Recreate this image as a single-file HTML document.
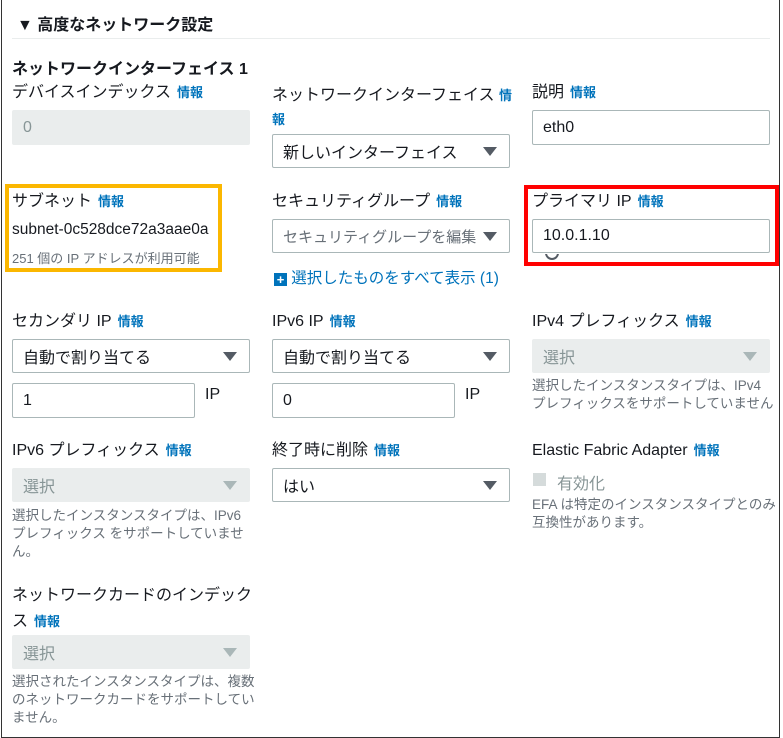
<!DOCTYPE html>
<html><head><meta charset="utf-8"><style>
*{margin:0;padding:0;box-sizing:border-box}
body{width:783px;height:738px;background:#fff;position:relative;overflow:hidden;font-family:"Liberation Sans","Noto Sans CJK JP",sans-serif;color:#16191f}
.frame{position:absolute;left:1px;top:-2px;width:779px;height:740px;border:1.5px solid #333}
.a{position:absolute;white-space:nowrap}
.lb{font-size:16px;line-height:18px}
.i{color:#0073bb;font-weight:bold;font-size:13px;margin-left:6px}
.box{position:absolute;border:1px solid #aab7b8;border-radius:2px;background:#fff;font-size:16px;padding-left:10px;display:flex;align-items:center}
.dis{background:#eaeded;border-color:#eaeded;color:#879596}
.arr{position:absolute;right:12px;top:50%;margin-top:-4px;width:0;height:0;border-left:7px solid transparent;border-right:7px solid transparent;border-top:9px solid #545b64}
.dis .arr{border-top-color:#aab7b8}
.help{font-size:13.5px;line-height:18px;color:#687078}
</style></head><body>
<div class="frame"></div>
<div class="a" style="left:17px;top:11px;font-size:16px;font-weight:bold">▼ 高度なネットワーク設定</div>
<div class="a" style="left:12px;top:38px;width:758px;height:1px;background:#eaeded"></div>
<div class="a" style="left:12px;top:55px;font-size:16px;font-weight:bold">ネットワークインターフェイス 1</div>

<div class="a lb" style="left:12px;top:84px">デバイスインデックス<span class="i">情報</span></div>
<div class="box dis" style="left:12px;top:110px;width:238px;height:35px">0</div>
<div class="a lb" style="left:272px;top:84px;line-height:24px">ネットワークインターフェイス <span class="i" style="margin:0">情</span><br><span class="i" style="margin:0">報</span></div>
<div class="box" style="left:272px;top:134px;width:238px;height:34px">新しいインターフェイス<div class="arr"></div></div>
<div class="a lb" style="left:532px;top:84px">説明<span class="i">情報</span></div>
<div class="box" style="left:532px;top:110px;width:238px;height:35px">eth0</div>

<div class="a" style="left:5px;top:184px;width:217px;height:88px;border:4px solid #fbb700"></div>
<div class="a lb" style="left:12px;top:193px">サブネット<span class="i">情報</span></div>
<div class="a" style="left:12px;top:221px;font-size:15.5px">subnet-0c528dce72a3aae0a</div>
<div class="a" style="left:12px;top:248px;font-size:13px;color:#687078">251 個の IP アドレスが利用可能</div>

<div class="a lb" style="left:272px;top:193px">セキュリティグループ<span class="i">情報</span></div>
<div class="box" style="left:272px;top:219px;width:238px;height:34px;color:#687078;font-size:15px">セキュリティグループを編集<div class="arr"></div></div>
<div class="a" style="left:274px;top:266px;font-size:15.5px;color:#0073bb"><span style="display:inline-block;width:13px;height:13px;background:#0073bb;color:#fff;font-size:13px;line-height:13px;text-align:center;font-weight:bold;vertical-align:-1px">+</span> 選択したものをすべて表示 (1)</div>

<div class="a" style="left:524px;top:185px;width:255px;height:81px;border:4px solid #f00"></div>
<div class="a lb" style="left:532px;top:193px">プライマリ IP<span class="i">情報</span></div>
<div class="box" style="left:532px;top:219px;width:238px;height:34px">10.0.1.10</div>
<div class="a" style="left:545px;top:246px;width:14px;height:14px;border:2px solid #545b64;border-radius:50%;clip-path:inset(8px 0 0 0)"></div>

<div class="a lb" style="left:12px;top:313px">セカンダリ IP<span class="i">情報</span></div>
<div class="box" style="left:12px;top:339px;width:238px;height:34px">自動で割り当てる<div class="arr"></div></div>
<div class="box" style="left:12px;top:383px;width:183px;height:35px">1</div>
<div class="a" style="left:205px;top:386px;font-size:16px">IP</div>
<div class="a lb" style="left:272px;top:313px">IPv6 IP<span class="i">情報</span></div>
<div class="box" style="left:272px;top:339px;width:238px;height:34px">自動で割り当てる<div class="arr"></div></div>
<div class="box" style="left:272px;top:383px;width:183px;height:35px">0</div>
<div class="a" style="left:465px;top:386px;font-size:16px">IP</div>
<div class="a lb" style="left:532px;top:313px">IPv4 プレフィックス<span class="i">情報</span></div>
<div class="box dis" style="left:532px;top:339px;width:238px;height:34px">選択<div class="arr"></div></div>
<div class="a help" style="left:532px;top:377px">選択したインスタンスタイプは、IPv4<br>プレフィックスをサポートしていません</div>

<div class="a lb" style="left:12px;top:442px">IPv6 プレフィックス<span class="i">情報</span></div>
<div class="box dis" style="left:12px;top:468px;width:238px;height:34px">選択<div class="arr"></div></div>
<div class="a help" style="left:12px;top:507px">選択したインスタンスタイプは、IPv6<br>プレフィックス をサポートしていませ<br>ん。</div>
<div class="a lb" style="left:272px;top:442px">終了時に削除<span class="i">情報</span></div>
<div class="box" style="left:272px;top:468px;width:238px;height:34px">はい<div class="arr"></div></div>
<div class="a lb" style="left:532px;top:442px">Elastic Fabric Adapter<span class="i">情報</span></div>
<div class="a" style="left:533px;top:473px;width:13px;height:13px;background:#d5dbdb"></div>
<div class="a" style="left:557px;top:470px;font-size:16px;color:#879596">有効化</div>
<div class="a help" style="left:532px;top:496px">EFA は特定のインスタンスタイプとのみ<br>互換性があります。</div>

<div class="a lb" style="left:12px;top:583px;line-height:26px">ネットワークカードのインデック<br>ス<span class="i">情報</span></div>
<div class="box dis" style="left:12px;top:635px;width:238px;height:34px">選択<div class="arr"></div></div>
<div class="a help" style="left:12px;top:673px">選択されたインスタンスタイプは、複数<br>のネットワークカードをサポートしてい<br>ません。</div>
</body></html>
